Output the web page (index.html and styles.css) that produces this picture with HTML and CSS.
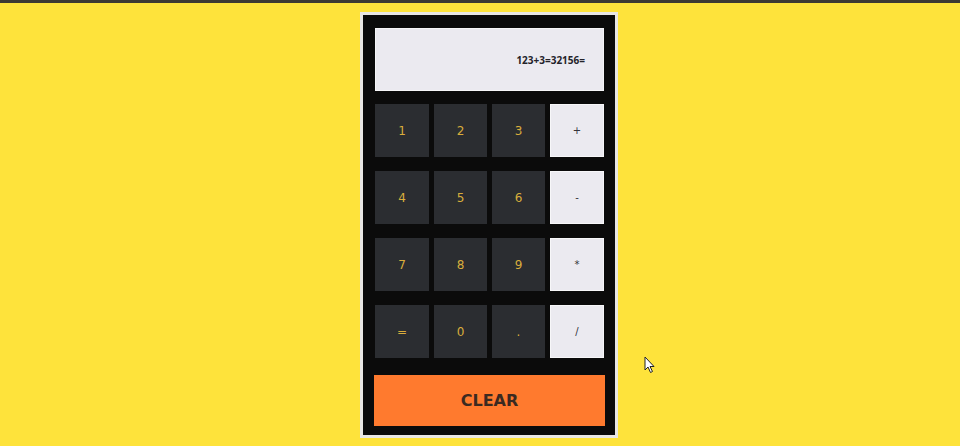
FILE: index.html
```html
<!DOCTYPE html>
<html lang="en">
<head>
<meta charset="utf-8">
<title>Calculator</title>
<link rel="stylesheet" href="styles.css">
</head>
<body>
<div class="topbar"></div>
<div class="calc">
  <div class="display">123+3=32156=</div>
  <div class="keys">
    <button class="key num">1</button>
    <button class="key num">2</button>
    <button class="key num">3</button>
    <button class="key op">+</button>
    <button class="key num">4</button>
    <button class="key num">5</button>
    <button class="key num">6</button>
    <button class="key op">-</button>
    <button class="key num">7</button>
    <button class="key num">8</button>
    <button class="key num">9</button>
    <button class="key op">*</button>
    <button class="key num">=</button>
    <button class="key num">0</button>
    <button class="key num">.</button>
    <button class="key op">/</button>
  </div>
  <button class="clear">CLEAR</button>
</div>
<svg class="cursor" width="12" height="18" viewBox="0 0 12 18">
  <path d="M1 1 L1 14 L4 11 L6.5 16.5 L8.5 15.5 L6 10.5 L10 10.5 Z" fill="#ffffff" stroke="#222" stroke-width="1" stroke-linejoin="round"/>
</svg>
</body>
</html>
```

FILE: styles.css
```css
html, body {
  margin: 0;
  padding: 0;
}
body {
  background: #fee33b;
  height: 446px;
  overflow: hidden;
  font-family: "Noto Sans", "DejaVu Sans", sans-serif;
}
.topbar {
  height: 3px;
  background: #3d3a33;
}
.calc {
  box-sizing: border-box;
  width: 258px;
  height: 426px;
  margin: 9px 0 0 360px;
  border: 3px solid #e9e7e4;
  background: #0b0b0b;
  padding: 13px 11px 9px 12px;
  display: flex;
  flex-direction: column;
}
.display {
  height: 63px;
  background: #ebeaf0;
  border: 1px solid #f6f6f8;
  box-sizing: border-box;
  display: flex;
  align-items: center;
  justify-content: flex-end;
  padding-right: 18px;
  font-family: "Open Sans", "DejaVu Sans", sans-serif;
  font-weight: 700;
  font-size: 10px;
  color: #24232a;
  padding-top: 1px;
}
.keys {
  margin-top: 13px;
  display: grid;
  grid-template-columns: 54px 53px 53px 54px;
  grid-auto-rows: 53px;
  column-gap: 5px;
  row-gap: 14px;
}
.key {
  border: none;
  margin: 0;
  padding: 0;
  font-family: "DejaVu Sans", sans-serif;
  font-size: 12px;
}
.num {
  background: #2b2d31;
  color: #d9ad3c;
}
.op {
  background: #ebeaf0;
  color: #34343a;
  font-size: 10px;
  border: 1px solid #f7f7f9;
}
.clear {
  margin: 17px -1px 0 -1px;
  height: 51px;
  border: none;
  background: #ff7a2e;
  color: #3b2a21;
  font-family: "DejaVu Sans", sans-serif;
  font-weight: 700;
  font-size: 16px;
  padding: 0;
}
.cursor {
  position: absolute;
  left: 644px;
  top: 356px;
}
```
